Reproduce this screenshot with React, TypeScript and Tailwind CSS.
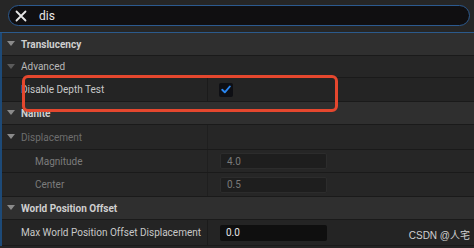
import React from "react";

const Arrow = ({ color = "#8a8a8a" }: { color?: string }) => (
  <svg width="8" height="6" viewBox="0 0 8 6" className="shrink-0">
    <path d="M0 0 L8 0 L4 5 Z" fill={color} />
  </svg>
);

const Row = ({
  h,
  bg,
  children,
}: {
  h: string;
  bg: string;
  children: React.ReactNode;
}) => (
  <div className={`flex items-stretch border-b border-[#1a1a1a] ${h} ${bg}`}>{children}</div>
);

export default function App() {
  return (
    <div
      className="relative w-[474px] h-[248px] overflow-hidden bg-[#242424] text-[10px] whitespace-nowrap"
      style={{ fontFamily: "Roboto, 'Liberation Sans', sans-serif" }}
    >
      {/* search */}
      <div className="h-[32px] bg-[#262626] pl-[8px] pr-[4px] pt-[5px]">
        <div className="flex h-[21px] items-center rounded-full border border-[#2c5a8f] bg-[#100f11] pl-[5px]">
          <svg width="12" height="12" viewBox="0 0 12 12" className="ml-[1px]">
            <path d="M1.5 1.5 L10.5 10.5 M10.5 1.5 L1.5 10.5" stroke="#e6e6e6" strokeWidth="1.8" strokeLinecap="round" />
          </svg>
          <span className="ml-[12px] text-[12px] text-[#e8e8e8]">dis</span>
        </div>
      </div>
      <div className="h-[1px] bg-[#2b5a8c]" />
      <div className="border-l-[2px] border-[#1d4a78]">
        <Row h="h-[23px]" bg="bg-[#2f2f2f]">
          <div className="flex items-center gap-[6px] pl-[5px]">
            <Arrow />
            <span className="font-bold text-[#cfcfcf]">Translucency</span>
          </div>
        </Row>
        <Row h="h-[22px]" bg="bg-[#262626]">
          <div className="flex items-center gap-[6px] pl-[5px]">
            <Arrow color="#5a5a5a" />
            <span className="text-[#b8b8b8]">Advanced</span>
          </div>
        </Row>
        <Row h="h-[24px]" bg="bg-[#242424]">
          <div className="flex w-[206px] items-center border-r border-[#1b1b1b] pl-[19px]">
            <span className="text-[#c8c8c8]">Disable Depth Test</span>
          </div>
          <div className="flex items-center pl-[11px]">
            <div className="flex h-[14px] w-[14px] items-center justify-center rounded-[2px] bg-[#0e0f14]">
              <svg width="10" height="9" viewBox="0 0 10 9">
                <path d="M1.2 4.8 L3.8 7.3 L8.8 1.5" stroke="#2a86f0" strokeWidth="1.9" fill="none" strokeLinecap="round" strokeLinejoin="round" />
              </svg>
            </div>
          </div>
        </Row>
        <Row h="h-[23px]" bg="bg-[#2f2f2f]">
          <div className="flex items-center gap-[6px] pl-[5px]">
            <Arrow />
            <span className="font-bold text-[#cfcfcf]">Nanite</span>
          </div>
        </Row>
        <Row h="h-[25px]" bg="bg-[#262626]">
          <div className="flex w-[206px] items-center gap-[6px] border-r border-[#1f1f1f] pl-[5px]">
            <Arrow color="#8a8a8a" />
            <span className="text-[#6e6e6e]">Displacement</span>
          </div>
        </Row>
        <Row h="h-[23px]" bg="bg-[#262626]">
          <div className="flex w-[206px] items-center border-r border-[#1f1f1f] pl-[33px]">
            <span className="text-[#7c7c7c]">Magnitude</span>
          </div>
          <div className="flex items-center pl-[12px]">
            <div className="flex h-[16px] w-[107px] items-center rounded-[2px] border border-[#2c2c2c] bg-[#1e1e1e] pl-[6px] text-[#7a7a7a]">
              4.0
            </div>
          </div>
        </Row>
        <Row h="h-[24px]" bg="bg-[#262626]">
          <div className="flex w-[206px] items-center border-r border-[#1f1f1f] pl-[33px]">
            <span className="text-[#7c7c7c]">Center</span>
          </div>
          <div className="flex items-center pl-[12px]">
            <div className="flex h-[16px] w-[107px] items-center rounded-[2px] border border-[#2c2c2c] bg-[#1e1e1e] pl-[6px] text-[#7a7a7a]">
              0.5
            </div>
          </div>
        </Row>
        <Row h="h-[23px]" bg="bg-[#2f2f2f]">
          <div className="flex items-center gap-[6px] pl-[5px]">
            <Arrow />
            <span className="font-bold text-[#cfcfcf]">World Position Offset</span>
          </div>
        </Row>
        <Row h="h-[26px]" bg="bg-[#242424]">
          <div className="flex w-[206px] items-center border-r border-[#1b1b1b] pl-[19px]">
            <span className="text-[#c8c8c8]">Max World Position Offset Displacement</span>
          </div>
          <div className="flex items-center pl-[12px]">
            <div className="flex h-[16px] w-[107px] items-center rounded-[2px] bg-[#0f0f0f] pl-[6px] text-[#e6e6e6]">
              0.0
            </div>
          </div>
        </Row>
      </div>

      {/* red highlight */}
      <div className="absolute left-[22px] top-[75px] h-[37px] w-[316px] rounded-[6px] border-[3px] border-[#e5472e]" />

      {/* watermark */}
      <div
        className="absolute right-[4px] bottom-[5px] text-[10px] text-[#d0d0d0]"
        style={{ fontFamily: "'Liberation Sans', 'Noto Sans CJK SC', sans-serif" }}
      >
        CSDN @人宅
      </div>
    </div>
  );
}
